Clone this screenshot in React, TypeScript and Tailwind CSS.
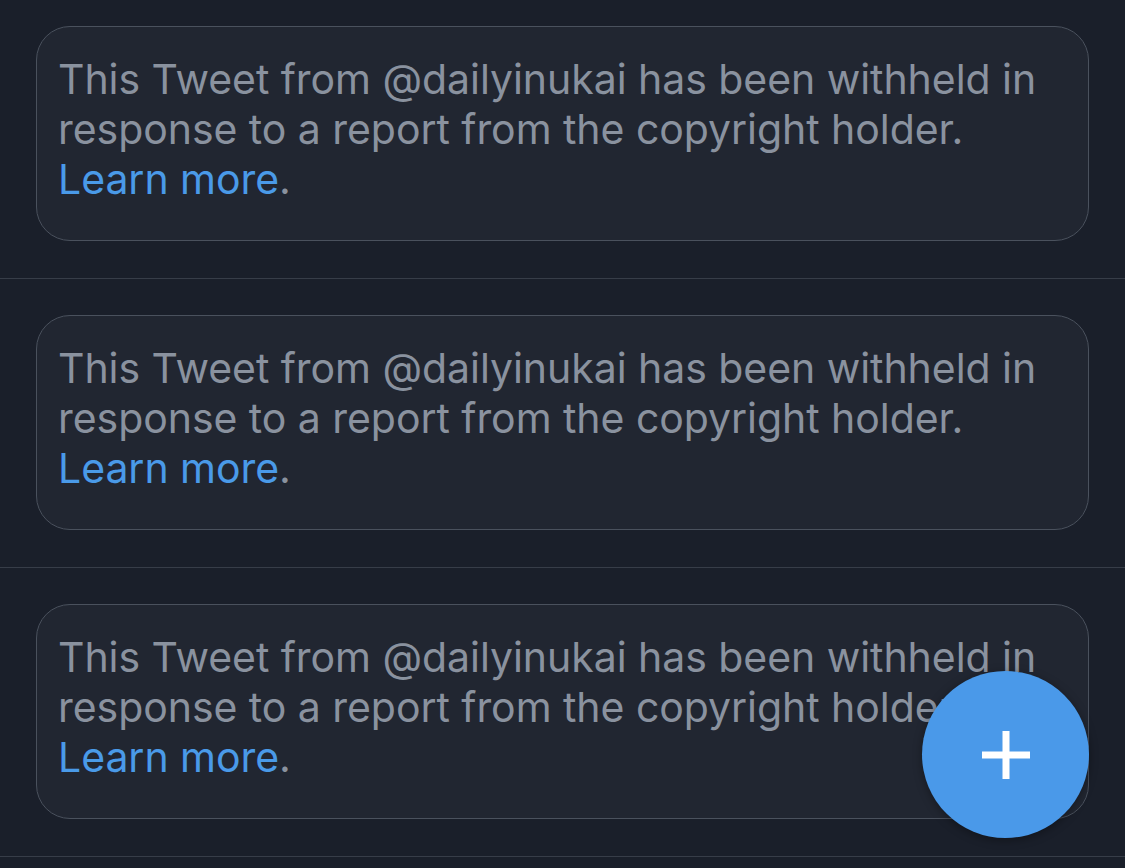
const tweets = [1, 2, 3]

const WithheldCard = () => (
  <div className="h-[215px] rounded-[34px] border border-[#4a515d] bg-[#212631] px-[21px] pt-[27px]">
    <p className="whitespace-nowrap text-[41px] leading-[50px] tracking-[-0.05px] text-[#8a929f] font-['Inter',sans-serif]">
      This Tweet from @dailyinukai has been withheld in
      <br />
      response to a report from the copyright holder.
      <br />
      <span className="text-[#4a9ae8]">Learn more</span>.
    </p>
  </div>
)

export default function App() {
  return (
    <div className="relative h-[868px] w-[1125px] overflow-hidden bg-[#1a1f2a]">
      <div className="-mt-[10px] flex flex-col">
        {tweets.map((t) => (
          <div key={t} className="border-b border-[#373d48] px-[36px] pt-[36px] pb-[37px]">
            <WithheldCard />
          </div>
        ))}
      </div>
      <button className="absolute right-[36px] bottom-[30px] flex h-[167px] w-[167px] items-center justify-center rounded-full bg-[#4a99e9] shadow-[0_2px_10px_rgba(0,0,0,0.35)]">
        <svg width="48" height="48" viewBox="0 0 48 48" fill="white">
          <rect x="20.5" y="0" width="7" height="48" />
          <rect x="0" y="20.5" width="48" height="7" />
        </svg>
      </button>
    </div>
  )
}
